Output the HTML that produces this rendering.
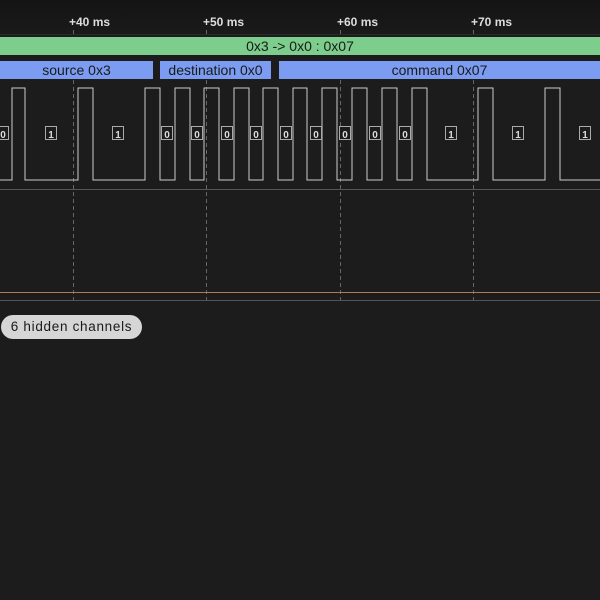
<!DOCTYPE html>
<html><head><style>
body{margin:0;width:600px;height:600px;background:#1c1c1c;overflow:hidden;font-family:"Liberation Sans",sans-serif;position:relative}
.hdr{position:absolute;left:0;top:0;width:600px;height:34px;background:linear-gradient(#141414,#1a1a1a);border-bottom:1px solid #2a2a2a}
.t{position:absolute;top:15px;color:#ddd;font-size:12px;font-weight:bold}
.bar{position:absolute;height:18px;line-height:18px;text-align:center;font-size:14px;color:#1a1a1a}
.pill{position:absolute;left:1px;top:315px;width:141px;height:24px;border-radius:12px;background:#d6d6d6;color:#1a1a1a;font-size:13.5px;line-height:24px;text-align:center;letter-spacing:.7px}
</style></head><body>
<div class="hdr"></div>
<div class="t" style="left:69px">+40 ms</div>
<div class="t" style="left:203px">+50 ms</div>
<div class="t" style="left:337px">+60 ms</div>
<div class="t" style="left:471px">+70 ms</div>
<div class="bar" style="left:0;top:37px;width:600px;background:#7dcd8c">0x3 -&gt; 0x0 : 0x07</div>
<div class="bar" style="left:0;top:61px;width:153px;background:#7b9cf0">source 0x3</div>
<div class="bar" style="left:160px;top:61px;width:111px;background:#7b9cf0">destination 0x0</div>
<div class="bar" style="left:279px;top:61px;width:321px;background:#7b9cf0">command 0x07</div>
<svg width="600" height="600" style="position:absolute;left:0;top:0" font-family="Liberation Sans" font-size="10" font-weight="600">
<g stroke="#666" stroke-dasharray="4,3" stroke-width="1">
<line x1="73.5" y1="30" x2="73.5" y2="37"/><line x1="206.5" y1="30" x2="206.5" y2="37"/><line x1="340.5" y1="30" x2="340.5" y2="37"/><line x1="473.5" y1="30" x2="473.5" y2="37"/>
<line x1="73.5" y1="80" x2="73.5" y2="300"/><line x1="206.5" y1="80" x2="206.5" y2="300"/><line x1="340.5" y1="80" x2="340.5" y2="300"/><line x1="473.5" y1="80" x2="473.5" y2="300"/>
</g>
<path fill="none" stroke="#ccc" stroke-width="1" d="M0 180H12V88H25V180H78V88H93V180H145V88H160V180H175V88H190V180H204V88H219V180H234V88H249V180H263V88H278V180H293V88H307V180H322V88H337V180H352V88H367V180H382V88H397V180H412V88H427V180H478V88H493V180H545V88H560V180H600"/>
<line x1="0" y1="189.5" x2="600" y2="189.5" stroke="#555"/>
<line x1="0" y1="292.5" x2="600" y2="292.5" stroke="#b07a55"/>
<line x1="0" y1="300.5" x2="600" y2="300.5" stroke="#555"/>
<g fill="#1c1c1c" stroke="#aaa">
<rect x="-2.5" y="126.5" width="11" height="13"/><rect x="45.5" y="126.5" width="11" height="13"/><rect x="112.5" y="126.5" width="11" height="13"/>
<rect x="161.5" y="126.5" width="11" height="13"/><rect x="191.5" y="126.5" width="11" height="13"/><rect x="221.5" y="126.5" width="11" height="13"/><rect x="250.5" y="126.5" width="11" height="13"/><rect x="280.5" y="126.5" width="11" height="13"/><rect x="310.5" y="126.5" width="11" height="13"/><rect x="339.5" y="126.5" width="11" height="13"/><rect x="369.5" y="126.5" width="11" height="13"/><rect x="399.5" y="126.5" width="11" height="13"/>
<rect x="445.5" y="126.5" width="11" height="13"/><rect x="512.5" y="126.5" width="11" height="13"/><rect x="579.5" y="126.5" width="11" height="13"/>
</g>
<g fill="#ddd" text-anchor="middle">
<text x="3" y="138">0</text><text x="51" y="138">1</text><text x="118" y="138">1</text>
<text x="167" y="138">0</text><text x="197" y="138">0</text><text x="227" y="138">0</text><text x="256" y="138">0</text><text x="286" y="138">0</text><text x="316" y="138">0</text><text x="345" y="138">0</text><text x="375" y="138">0</text><text x="405" y="138">0</text>
<text x="451" y="138">1</text><text x="518" y="138">1</text><text x="585" y="138">1</text>
</g>
</svg>
<div class="pill">6 hidden channels</div>
</body></html>
